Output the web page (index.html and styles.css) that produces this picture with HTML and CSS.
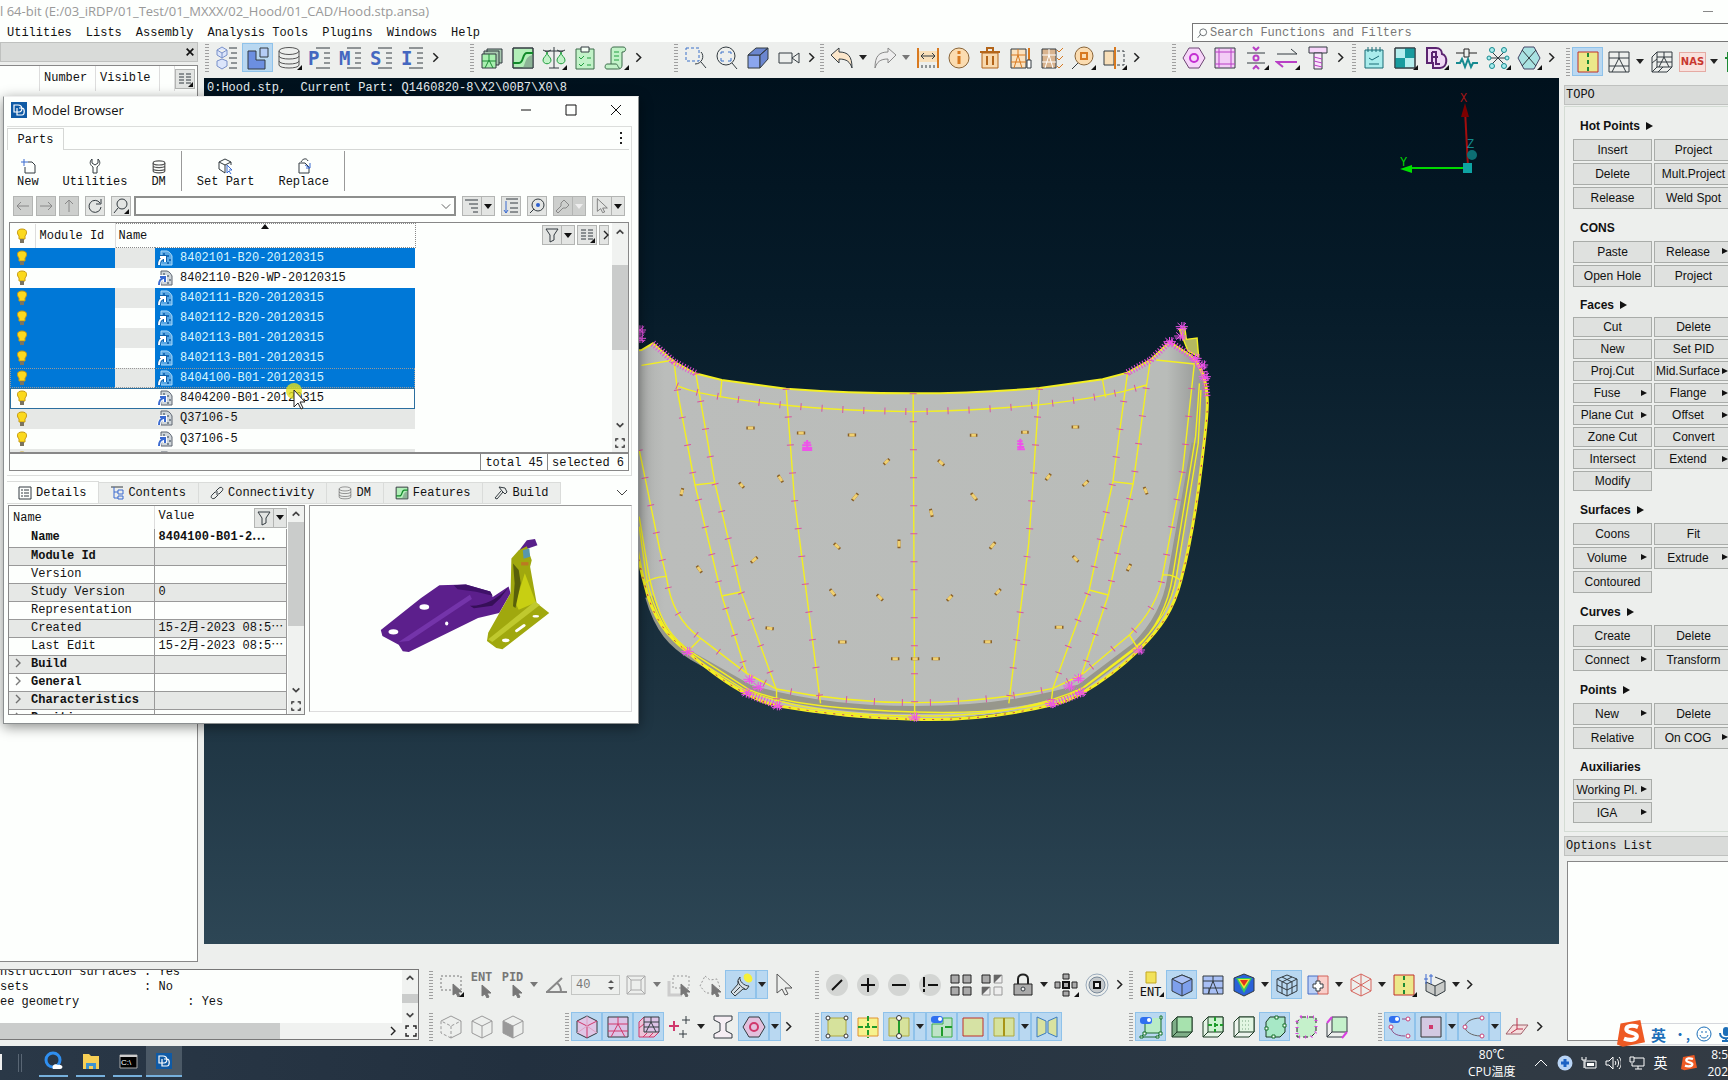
FILE: index.html
```html
<!DOCTYPE html>
<html lang="en">
<head>
  <meta charset="UTF-8">
  <title>Hood.stp.ansa</title>
  <meta name="viewport" content="width=device-width, initial-scale=1.0">
  <link rel="stylesheet" href="styles.css">
</head>
<body>

<!-- icon sprite -->
<svg class="sprite" aria-hidden="true">
  <symbol id="chev-r" viewBox="0 0 12 12"><path d="M4 2l4 4-4 4" stroke="#222" stroke-width="1.4"/></symbol>
  <symbol id="chev-u" viewBox="0 0 12 12"><path d="M2 8l4-4 4 4" stroke="#444" stroke-width="2"/></symbol>
  <symbol id="chev-d" viewBox="0 0 12 12"><path d="M2 4l4 4 4-4" stroke="#444" stroke-width="2"/></symbol>
  <symbol id="chev-thin" viewBox="0 0 12 12"><path d="M1 4l5 5 5-5" stroke="#444"/></symbol>
  <symbol id="full" viewBox="0 0 12 12"><path d="M1 4V1h3M8 1h3v3M11 8v3H8M4 11H1V8" stroke="#222" stroke-width="1.4"/></symbol>

  <symbol id="tree3d" viewBox="0 0 24 24"><path d="M2 4l5-3 5 3v5l-5 3-5-3zM2 4l5 3 5-3M7 7v5M2 15l5-2 5 2v5l-5 3-5-3z" fill="#dbe5fb" stroke="#7990c9"/><path d="M14 2h8M16 7h6M14 12h8M16 17h6M14 22h8"/></symbol>
  <symbol id="blocks" viewBox="0 0 24 24"><path d="M2 5h8v9h9v9H2z" fill="#6c8fe0"/><path d="M14 2h8v9h-8z" fill="#b5cdf5"/></symbol>
  <symbol id="db" viewBox="0 0 24 24"><path d="M2 5v14c0 4 20 4 20 0V5M2 10c0 4 20 4 20 0M2 15c0 4 20 4 20 0" stroke="#555"/><ellipse cx="12" cy="5" rx="10" ry="3.500" stroke="#555"/></symbol>
  <symbol id="lines" viewBox="0 0 24 24"><path d="M8 2h14M16 7h6M16 12h6M16 17h6M8 22h14"/></symbol>
  <symbol id="layers" viewBox="0 0 24 24"><path d="M7 6V3h15v14h-3M4 8V5h15v14h-3" fill="#a8c8b0"/><path d="M2 8h14v14H2z" fill="#a9f0b0"/><path d="M2 15h14M9 8v6M5 22l4-8 4 8" stroke="#1d8a35"/></symbol>
  <symbol id="curve" viewBox="0 0 24 24"><path d="M2 2h20v20H2z" fill="#b2efb8"/><path d="M22 9v13H11c4-2 2-12 11-13z" fill="#8cb396" stroke="none"/><path d="M2 2h20v20H2z"/><path d="M2 17h6c5 0 3-10 8-10h6" stroke="#128a2b" stroke-width="2"/></symbol>
  <symbol id="scale" viewBox="0 0 24 24"><path d="M12 1v21M7 22h10M3 5h18M1 4l4 2 4-2M15 4l4 2 4-2"/><path d="M5 6c0 4-4 5-4 8 0 5 8 5 8 0 0-3-4-4-4-8zM19 6c0 4-4 5-4 8 0 5 8 5 8 0 0-3-4-4-4-8z" fill="#c2f2c8" stroke="#22a040"/></symbol>
  <symbol id="clip" viewBox="0 0 24 24"><path d="M3 3h18v20H3z" fill="#c2f2c8" stroke="#3a6b49"/><path d="M8 1h8v5H8z" fill="#f4fff4"/><path d="M6 11l2 2 3-3M6 18l2 2 3-3M14 12h4M14 19h4" stroke="#22a040"/></symbol>
  <symbol id="scroll" viewBox="0 0 24 24"><path d="M7 18V4c0-2 1-3 3-3h9c4 0 3 5 0 5h-1v13c0 4-3 4-5 4H3c-3 0-2-5 0-5h9c2 0 2 5 4 4" fill="#c2f2c8" stroke="#3a6b49"/><path d="M10 6h5M10 10h5M10 14h5" stroke="#22a040"/></symbol>
  <symbol id="zoomsel" viewBox="0 0 24 24"><path d="M2 2h13v13H2z" stroke="#3a71c9" stroke-dasharray="3 2"/><path d="M17 6c4 4 1 12-6 12M17 16l5 6"/></symbol>
  <symbol id="zoomfit" viewBox="0 0 24 24"><circle cx="11" cy="10" r="9"/><path d="M17 17l5 6"/><path d="M6 8V6h3M13 6h3v2M16 12v3h-3M9 15H6v-3" stroke="#3a71c9"/></symbol>
  <symbol id="prism" viewBox="0 0 24 24"><path d="M2 9h12v13H2z" fill="#8ba6ee"/><path d="M2 9l8-7h12l-8 7zM14 22l8-9V2l-8 7z" fill="#6b86cf"/></symbol>
  <symbol id="cam" viewBox="0 0 24 24"><path d="M2 7h13v10H2z"/><path d="M15 12l7-5v10z"/></symbol>
  <symbol id="undo" viewBox="0 0 24 24"><path d="M1 9l8-7v4c9 0 13 4 13 16-2-6-5-9-13-9v4z" fill="#fbe6ca"/></symbol>
  <symbol id="redo" viewBox="0 0 24 24"><path d="M23 9l-8-7v4C6 6 2 10 2 22c2-6 5-9 13-9v4z" fill="#eee" stroke="#888"/></symbol>
  <symbol id="ruler" viewBox="0 0 24 24"><path d="M2 5h20v11H2z" fill="#f8dfb9" stroke="none"/><path d="M2 2v20M22 2v20" stroke="#d8791f" stroke-width="2"/><path d="M5 10h14M8 7l-3 3 3 3M16 7l3 3-3 3M6 22v-3M10 22v-3M14 22v-3M18 22v-3"/></symbol>
  <symbol id="info" viewBox="0 0 24 24"><circle cx="12" cy="12" r="10" fill="#fbdcb0" stroke="#8a6437"/><path d="M12 10v8M12 5v3" stroke="#d8791f" stroke-width="3"/></symbol>
  <symbol id="trash" viewBox="0 0 24 24"><path d="M4 7h16v15H4z" fill="#f8d9ae" stroke="#b3651a"/><path d="M2 6h20M9 5V2h6v3M9 10v9M15 10v9" stroke="#b3651a" stroke-width="2"/></symbol>
  <symbol id="meshfix" viewBox="0 0 24 24"><path d="M2 3h15v19H2z" fill="#fbe2bf"/><path d="M2 9h15M2 16h15M9 3v6M5 22l4-13 4 13" stroke="#d8791f"/><path d="M20 2v12" stroke="#d8791f" stroke-width="2"/><path d="M18 14h4v8h-4z" fill="#fff"/></symbol>
  <symbol id="meshchk" viewBox="0 0 24 24"><path d="M2 3h14v19H2z" fill="#d9b48f"/><path d="M2 9h14M2 16h14M9 3v6M5 22l4-13 4 13" stroke="#fff"/><path d="M17 4l2 2 4-4M17 12l2 2 4-4M17 20l2 2 4-4" stroke="#d8791f"/></symbol>
  <symbol id="zoompt" viewBox="0 0 24 24"><circle cx="13" cy="10" r="9" fill="#fbdcb0" stroke="#8a6437"/><path d="M10 7h6v6h-6z" stroke="#d8791f" stroke-width="2"/><path d="M7 17l-6 6"/></symbol>
  <symbol id="mirror" viewBox="0 0 24 24"><path d="M2 5h10v14H2z" fill="#f8dfb9"/><path d="M15 5h7v14h-7" stroke-dasharray="3 2"/><path d="M13 1v22" stroke="#d8791f" stroke-width="2"/></symbol>
  <symbol id="hexnut" viewBox="0 0 24 24"><path d="M7 2h10l6 10-6 10H7L1 12z" fill="#f7d5fa" stroke="#6b4472"/><circle cx="12" cy="12" r="4" stroke="#c42fd2" stroke-width="2"/></symbol>
  <symbol id="frame" viewBox="0 0 24 24"><path d="M2 2h20v20H2z" fill="#f3cdf6"/><path d="M6 2v20M18 2v20M2 6h20M2 18h20" stroke="#b83fc5"/></symbol>
  <symbol id="pinch" viewBox="0 0 24 24"><path d="M3 7h18M3 17h18"/><path d="M9 1l3 3 3-3M9 23l3-3 3 3" stroke="#b83fc5" stroke-width="2"/><circle cx="12" cy="12" r="2.500" stroke="#b83fc5" stroke-width="2"/></symbol>
  <symbol id="swap" viewBox="0 0 24 24"><path d="M2 8h20l-6-5"/><path d="M22 16H2l6 5" stroke="#b83fc5" stroke-width="2"/></symbol>
  <symbol id="bolt" viewBox="0 0 24 24"><path d="M3 1h18v6H3z" fill="#f7d5fa"/><path d="M8 7h8v16H8z" fill="#fbe4fc"/><path d="M8 11l8 2M8 15l8 2M8 19l8 2" stroke="#b83fc5"/></symbol>
  <symbol id="note" viewBox="0 0 24 24"><path d="M3 4h18v18H3z" fill="#a9ecec" stroke="#186a75"/><path d="M6 1v5M10 1v5M14 1v5M18 1v5M7 12l3 2 7-4M7 18h10" stroke="#186a75"/></symbol>
  <symbol id="checker" viewBox="0 0 24 24"><path d="M2 2h20v20H2z" fill="#b5eeee"/><path d="M12 2h10v10H12zM2 12h10v10H2z" fill="#199b9e" stroke="none"/><path d="M2 2h20v20H2z"/></symbol>
  <symbol id="de" viewBox="0 0 24 24"><path d="M3 2h9c4 0 6 3 6 6 6 1 6 14-2 14H9v-5H3z" fill="#f0d9f5" stroke="#5b2470" stroke-width="2"/><path d="M8 6h5M8 6v11M8 11h6M12 7v11h4" stroke="#5b2470" stroke-width="2"/></symbol>
  <symbol id="spring" viewBox="0 0 24 24"><path d="M1 7h8M9 3v8M9 3h5v8H9M14 7h8" stroke="#222"/><path d="M1 17h4l2-4 3 8 3-8 3 8 2-4h5" stroke="#178a90" stroke-width="2"/></symbol>
  <symbol id="star" viewBox="0 0 24 24"><path d="M5 5l14 14M19 5L5 19M3 12h18"/><g fill="#a9ecec" stroke="#178a90"><circle cx="6" cy="4" r="2.500"/><circle cx="18" cy="4" r="2.500"/><circle cx="3" cy="12" r="2"/><circle cx="21" cy="12" r="2"/><circle cx="6" cy="20" r="2.500"/><circle cx="18" cy="20" r="2.500"/></g></symbol>
  <symbol id="hexx" viewBox="0 0 24 24"><path d="M7 1h10l6 11-6 11H7L1 12z" fill="#a9e2e2" stroke="#446"/><path d="M5 4l14 16M19 4L5 20"/></symbol>
  <symbol id="yface" viewBox="0 0 24 24"><path d="M2 2h20v20H2z" fill="#ece88a" stroke="#c0302c"/><path d="M12 3v18" stroke="#1d8a35" stroke-width="2" stroke-dasharray="4 3"/></symbol>
  <symbol id="mesh" viewBox="0 0 24 24"><path d="M2 2h20v20H2zM2 8h20M2 16h20M12 2v6M5 22l7-14 7 14"/></symbol>
  <symbol id="mesh3" viewBox="0 0 24 24"><path d="M7 2h15v15H7zM7 7h15M7 12h15M14 2v5M9 17l5-10 5 10M7 2L2 7v15l5-5M2 22h15l5-5M2 13l5-4M8 22l5-5"/></symbol>
  <symbol id="green" viewBox="0 0 24 24"><path d="M4 2v20M1 8h7M4 4h20" stroke="#1d8a35" stroke-width="2"/></symbol>

  <symbol id="arrowfill" viewBox="0 0 24 24"><path d="M14 11v11l3-2 2 4 2-1-2-4h4z" fill="#777" stroke="#777"/></symbol>
  <symbol id="selbox" viewBox="0 0 24 24"><path d="M2 3h20v14H2z" stroke="#777" stroke-dasharray="2 2"/><use href="#arrowfill"/></symbol>
  <symbol id="angle" viewBox="0 0 24 24"><path d="M2 19h21M3 19L18 5M13 10c3 2 4 6 4 9" stroke="#888" stroke-width="2"/></symbol>
  <symbol id="boxes" viewBox="0 0 24 24"><path d="M3 3h18v18H3zM7 7h10v10H7zM3 3l4 4M21 3l-4 4M3 21l4-4M21 21l-4-4" stroke="#aaa"/></symbol>
  <symbol id="selall" viewBox="0 0 24 24"><path d="M6 3h16v12H6z" stroke="#999" stroke-dasharray="2 2"/><path d="M2 8v14h13" stroke="#ccc" stroke-width="3"/><use href="#arrowfill"/></symbol>
  <symbol id="selpoly" viewBox="0 0 24 24"><path d="M7 3l5 4 7-1 3 9-5 5H8l-6-7z" stroke="#999" stroke-dasharray="2 2"/><use href="#arrowfill"/></symbol>
  <symbol id="torch" viewBox="0 0 24 24"><ellipse cx="19" cy="5" rx="4" ry="5" fill="#f5f03a" stroke="none" transform="rotate(-40 19 5)"/><path d="M11 4c-1 4 4 9 9 9l-2 3c-1 1-3 0-4 0l-8 7-4-4 7-8V7z" fill="#d5dfe6"/><path d="M9 8c1 4 3 6 7 8M5 20l6-6"/></symbol>
  <symbol id="cursor" viewBox="0 0 24 24"><path d="M5 1v19l5-4 3 6 3-1-3-6h7z" stroke="#555"/></symbol>
  <symbol id="disc" viewBox="0 0 24 24"><circle cx="12" cy="12" r="11" fill="#d3d5d3" stroke="none"/></symbol>
  <symbol id="quad" viewBox="0 0 24 24"><path d="M2 2h8v8H2zM14 2h8v8h-8zM2 14h8v8H2zM14 14h8v8h-8z" fill="#aaa" stroke="#222"/></symbol>
  <symbol id="quad2" viewBox="0 0 24 24"><path d="M2 2h8v8H2z" fill="#aaa" stroke="#222"/><path d="M14 2h8v8h-8zM2 14h8v8H2zM14 14h8v8h-8z" fill="#eee" stroke="#999"/><path d="M14 2h8l-8 8zM2 14h8l-8 8z" fill="#666" stroke="none"/></symbol>
  <symbol id="lock" viewBox="0 0 24 24"><path d="M7 11V6c0-6 10-6 10 0v5" stroke="#222" stroke-width="2"/><path d="M3 11h18v11H3z" fill="#aaa" stroke="#222"/><circle cx="12" cy="16" r="2" fill="#eee"/></symbol>
  <symbol id="cross" viewBox="0 0 24 24"><path d="M9 1h6v5H9zM9 9h6v6H9zM9 18h6v5H9zM1 9h5v6H1zM18 9h5v6h-5z" fill="#aaa" stroke="#222"/><path d="M9 9h6v6H9z" stroke="#111" stroke-width="2"/></symbol>
  <symbol id="target" viewBox="0 0 24 24"><circle cx="12" cy="12" r="11" stroke="#9ab"/><circle cx="12" cy="12" r="8" fill="#c4c8cb" stroke="#789"/><path d="M9 9h6v6H9z" fill="#eee" stroke="#111" stroke-width="2"/></symbol>
  <symbol id="entbox" viewBox="0 0 24 14"><path d="M7 1h10v11H7z" fill="#f2e25a" stroke="#c3a722"/></symbol>
  <symbol id="cubeblue" viewBox="0 0 24 24"><path d="M2 6l10-4 10 4v12l-10 5-10-5z" fill="#7ea0ec"/><path d="M2 6l10-4 10 4-10 5z" fill="#a9c0f5"/><path d="M12 11v12"/></symbol>
  <symbol id="meshblue" viewBox="0 0 24 24"><path d="M2 3h20v18H2z" fill="#a9c0f5"/><path d="M2 8h20M2 15h20M12 3v5M7 21l5-13 5 13M8 15v6"/></symbol>
  <symbol id="rainbow" viewBox="0 0 24 24"><path d="M2 5l10-4 10 4v13l-10 5-10-5z" fill="#2b62d9"/><path d="M4 5h16l-8 15z" fill="#35c860" stroke="none"/><path d="M6 6h12l-6 10z" fill="#f3e134" stroke="none"/><path d="M8 7h8l-4 6z" fill="#e0311e" stroke="none"/></symbol>
  <symbol id="cubegrid" viewBox="0 0 24 24"><path d="M2 6l10-4 10 4v12l-10 5-10-5zM2 6l10 5 10-5M12 11v12M2 12l10 5 10-5M7 4l10 5v12M17 4L7 9v12"/></symbol>
  <symbol id="plusbox" viewBox="0 0 24 24"><path d="M2 3h10v18H2z" fill="#bcd0f5" stroke="#476dc4"/><path d="M12 3h10v18H12z" fill="#f9cfca" stroke="#d3625a"/><path d="M10 8h4v3h3v4h-3v3h-4v-3H7v-4h3z" fill="#fff"/></symbol>
  <symbol id="cubered" viewBox="0 0 24 24"><path d="M2 6l10-5 10 5v12l-10 5-10-5zM2 6l10 6 10-6M12 1v11M12 12v11M2 18l10-6 10 6" stroke="#d6645c"/></symbol>
  <symbol id="cubeset" viewBox="0 0 24 24"><path d="M3 9l9 4 10-5v10l-9 5-10-5z" fill="#c9cbc9"/><path d="M12 4l10 4M12 13v10"/><path d="M3 1v10M8 1v10M1 6h4M6 3h4" stroke="#3c68cf"/></symbol>

  <symbol id="cubedash" viewBox="0 0 24 24"><path d="M2 6l10-5 10 5v12l-10 5" stroke="#999"/><path d="M12 23L2 18V6l10 5 10-5M12 11v12" stroke="#999" stroke-dasharray="3 2"/></symbol>
  <symbol id="cubegray" viewBox="0 0 24 24"><path d="M2 6l10-5 10 5v12l-10 5-10-5zM2 6l10 5 10-5M12 11v12" stroke="#999"/></symbol>
  <symbol id="cubehalf" viewBox="0 0 24 24"><path d="M2 6l10-5 10 5v12l-10 5-10-5zM2 6l10 5 10-5M12 11v12" stroke="#999"/><path d="M2 6l10 5v12L2 18z" fill="#999" stroke="none"/></symbol>
  <symbol id="cubepink" viewBox="0 0 24 24"><path d="M2 6l10-5 10 5v12l-10 5-10-5z" fill="#e0c6e6"/><path d="M2 6l10 5 10-5M12 11v12" stroke="#d0386c"/><path d="M12 1v10M2 18l10-7 10 7" stroke="#dfa0c4"/></symbol>
  <symbol id="meshpink" viewBox="0 0 24 24"><path d="M2 2h20v20H2z" fill="#dcc3e6"/><path d="M2 9h20M2 16h20M12 2v7M5 22l7-13 7 13" stroke="#d0386c"/></symbol>
  <symbol id="mesh3pink" viewBox="0 0 24 24"><path d="M7 2L2 7v15h15l5-5M2 13l5-4M6 22l4-4M12 22l4-4" stroke="#d0386c" fill="#edc3d8"/><path d="M7 2h15v15H7z" fill="#dcc3e6"/><path d="M7 7h15M7 12h15M14 2v5M9 17l5-10 5 10"/></symbol>
  <symbol id="pluses" viewBox="0 0 24 24"><path d="M1 11h10M6 6v10" stroke="#d0386c" stroke-width="2"/><path d="M14 5h8M18 1v8M11 19h8M15 15v8"/></symbol>
  <symbol id="ibeam" viewBox="0 0 24 24"><path d="M3 1h18v4l-6 3v8l6 3v4H3v-4l6-3V8L3 5z" fill="#f6eef4"/></symbol>
  <symbol id="hexpink" viewBox="0 0 24 24"><path d="M7 2h10l6 10-6 10H7L1 12z" fill="#e3c0dd"/><circle cx="12" cy="12" r="4" stroke="#d0386c" stroke-width="2"/></symbol>
  <symbol id="sqpts" viewBox="0 0 24 24"><path d="M3 3h18v18H3z" fill="#d6e29c" stroke="#b0a93e"/><g fill="#fff" stroke="#333"><circle cx="3" cy="3" r="2"/><circle cx="21" cy="3" r="2"/><circle cx="3" cy="21" r="2"/><circle cx="21" cy="21" r="2"/></g></symbol>
  <symbol id="sqplus" viewBox="0 0 24 24"><path d="M2 3h20v18H2z" fill="#f6f28d" stroke="#e0922e"/><path d="M2 12h20M12 1v22" stroke="#1f9c2b" stroke-width="2" stroke-dasharray="5 2"/></symbol>
  <symbol id="sqmid" viewBox="0 0 24 24"><path d="M2 3h20v18H2z" fill="#d6e29c" stroke="#b0a93e"/><path d="M12 3v18" stroke="#1f9c2b" stroke-width="2"/><g fill="#fff" stroke="#333"><circle cx="12" cy="3" r="2.500"/><circle cx="12" cy="21" r="2.500"/></g></symbol>
  <symbol id="sqtog" viewBox="0 0 24 24"><path d="M2 9h11V3h9v19H2z" fill="#bfe3c7" stroke="#3fae4b"/><path d="M12 12v9M15 12h7" stroke="#1f9c2b" stroke-width="2"/><rect x="1" y="1" width="12" height="7" rx="3" fill="#2f6ff0" stroke="none"/><circle cx="10" cy="4" r="2" fill="#fff" stroke="none"/></symbol>
  <symbol id="sqred" viewBox="0 0 24 24"><path d="M2 3h20v18H2z" fill="#d6e2a4" stroke="#c0302c"/></symbol>
  <symbol id="sqsplit" viewBox="0 0 24 24"><path d="M2 3h20v18H2z" fill="#d6e29c" stroke="#b0a93e"/><path d="M12 3v18" stroke="#a89416" stroke-width="2"/></symbol>
  <symbol id="book" viewBox="0 0 24 24"><path d="M2 2l9 4v12l-9 4zM22 2l-9 4v12l9 4z" fill="#d9e2a0" stroke="#3b7bc0"/></symbol>
  <symbol id="gtog" viewBox="0 0 24 24"><path d="M6 9h7V3h9v15H6z" fill="#b8ecc6" stroke="none"/><path d="M22 3v15H6V9M6 18l-4 4h16l4-4" stroke="#1d6a30"/><path d="M1 21h3v2H1zM17 21h3v2h-3zM21 1h2v3h-2zM20 17h3v3h-3zM4 17h3v3H4z" fill="#fff" stroke="#14732b"/><rect x="1" y="2" width="12" height="7" rx="3" fill="#2f6ff0" stroke="none"/><circle cx="10" cy="5" r="2" fill="#fff" stroke="none"/></symbol>
  <symbol id="gbox" viewBox="0 0 24 24"><path d="M7 2L2 7v15h15l5-5V2z" fill="#7fae88" stroke="#1c3b24"/><path d="M7 2h15v15H7z" fill="#a7e2ae" stroke="#1c3b24"/><path d="M2 22l5-5" stroke="#1c3b24"/></symbol>
  <symbol id="gplus" viewBox="0 0 24 24"><path d="M7 2L2 7v15h15l5-5V2z" fill="#e6f5e7" stroke="#1c3b24"/><path d="M7 2h15v15H7z" fill="#cdf3d0" stroke="#1c3b24"/><path d="M2 22l5-5" stroke="#1c3b24"/><path d="M7 10h15M14 2v15" stroke="#1f9c2b" stroke-width="2" stroke-dasharray="4 2"/></symbol>
  <symbol id="gdots" viewBox="0 0 24 24"><path d="M7 2L2 7v15h15l5-5V2z" fill="#eef5ee" stroke="#1c3b24"/><path d="M7 2h15v15H7z" fill="#e2f6e2" stroke="#1c3b24"/><path d="M2 22l5-5" stroke="#1c3b24"/><path d="M10 6h9M10 10h9M10 14h9" stroke="#7aa582" stroke-dasharray="1 2"/></symbol>
  <symbol id="gpts" viewBox="0 0 24 24"><path d="M7 2h15v15l-5 5H3V7z" fill="#a7e8c6" stroke="#1c3b24"/><g fill="#fff" stroke="#14732b"><path d="M12 1h3v3h-3zM20 9h3v3h-3zM2 12h3v3H2zM9 20h3v3H9z"/></g></symbol>
  <symbol id="gmag" viewBox="0 0 24 24"><path d="M7 2h15v15l-5 5H3V7z" fill="#c5f1cb" stroke="#222" stroke-dasharray="5 3"/><path d="M7 2h15v15l-5 5H3V7z" stroke="#d83fe0" stroke-width="3" stroke-dasharray="1 5"/></symbol>
  <symbol id="gside" viewBox="0 0 24 24"><path d="M7 2h15v15H7z" fill="#c5f1cb"/><path d="M2 8v14h15M2 22l5-5"/><path d="M7 2L2 8M22 17l-5 6" stroke="#d83fe0" stroke-width="2"/></symbol>
  <symbol id="ctog" viewBox="0 0 24 24"><path d="M3 11c0 6 4 10 14 10M14 4h4" stroke="#8c4f87"/><rect x="1" y="1" width="11" height="7" rx="3" fill="#2f6ff0" stroke="none"/><circle cx="9" cy="4" r="2" fill="#fff" stroke="none"/><g fill="#fff" stroke="#c94279"><circle cx="20" cy="4" r="2"/><circle cx="3" cy="12" r="2"/><circle cx="20" cy="21" r="2"/></g></symbol>
  <symbol id="sqpt" viewBox="0 0 24 24"><path d="M2 2h20v20H2z" fill="#d3c9e2" stroke="#333"/><path d="M10 10h4v4h-4z" fill="#d0386c" stroke="none"/></symbol>
  <symbol id="carc" viewBox="0 0 24 24"><path d="M19 3C8 3 3 8 3 12s6 9 16 9" stroke="#666"/><g fill="#fff" stroke="#c94279"><circle cx="20" cy="3" r="2"/><circle cx="3" cy="12" r="2"/><circle cx="20" cy="21" r="2"/></g></symbol>
  <symbol id="plane" viewBox="0 0 24 24"><path d="M8 10h15l-7 9H1z" fill="#f6dede" stroke="#a0606a"/><path d="M12 3v11h6M12 14l-6 4" stroke="#c0304c"/></symbol>

  <symbol id="bulb" viewBox="0 0 12 16"><path d="M6 1C0 1 1 6 3 8v3h6V8c2-2 3-7-3-7z" fill="#fbd91e" stroke="#c79a10"/><path d="M4 12h4M4 14h4" stroke="#7b7460" stroke-width="2"/></symbol>
  <symbol id="part" viewBox="0 0 16 16"><path d="M4 1h6c3 1 4 3 5 5v9H4z" fill="#cfd6da" stroke="#5c6470"/><path d="M6 3h2v2H6zM10 5h2v2h-2zM12 9h2v2h-2zM10 12h2v2h-2z" fill="#7e8a94" stroke="none"/><path d="M3 7h5v5M8 7c-5 2-6 4-6 8" stroke="#fff" stroke-width="4"/><path d="M3 7h5v5M8 7c-5 2-6 4-6 8" stroke="#3b6bd0" stroke-width="2"/></symbol>
  <symbol id="part-sel" viewBox="0 0 16 16"><path d="M4 1h6c3 1 4 3 5 5v9H4z" fill="#58a8e6" stroke="#a8d8f8"/><path d="M6 3h2v2H6zM10 5h2v2h-2zM12 9h2v2h-2zM10 12h2v2h-2z" fill="#1d6cb4" stroke="none"/><path d="M3 7h5v5M8 7c-5 2-6 4-6 8" stroke="#0a62b0" stroke-width="4"/><path d="M3 7h5v5M8 7c-5 2-6 4-6 8" stroke="#fff" stroke-width="2"/></symbol>
  <symbol id="funnel" viewBox="0 0 16 16"><path d="M2 2h12L10 8v5l-4 2V8z"/></symbol>
  <symbol id="cols" viewBox="0 0 16 16"><path d="M2 3h5M2 6h5M2 9h5M2 12h5M9 3h5M9 6h5M9 9h5M9 12h5"/></symbol>
  <symbol id="ansa" viewBox="0 0 16 16"><path d="M0 0h16v16H0z" fill="#0f5aa5" stroke="none"/><path d="M3 3h4c5 0 5 7 1 7H3zM8 6h3c3 0 3 7 0 7H6V6" stroke="#fff" stroke-width="1.200"/></symbol>
  <symbol id="new" viewBox="0 0 16 16"><path d="M8 4h4l3 3v8H5V9"/><path d="M1 4h7M4 1v7" stroke="#3b6bd0"/></symbol>
  <symbol id="wrench" viewBox="0 0 16 16"><path d="M5 1v4l3 2 3-2V1c3 3 2 6-1 8v6H6V9C3 7 2 4 5 1z"/></symbol>
  <symbol id="setpart" viewBox="0 0 16 16"><path d="M1 4l6-3 6 3v3M1 4v7l6 4V7M1 4l6 3 6-3"/><path d="M9 7v8l2-2 2 3M9 7l5 5h-3" stroke="#3b6bd0"/></symbol>
  <symbol id="replace" viewBox="0 0 16 16"><path d="M3 15V5h6l4 4v6zM5 4c2-4 6-4 7-1"/><path d="M9 7l5 3M14 5v5h-4" stroke="#3b6bd0"/></symbol>
  <symbol id="logo-s" viewBox="0 0 24 24"><path d="M3 3l17-3 4 19-19 4-5-2z" fill="#ee5a24" stroke="none"/><path d="M18 6c-5-2-10-1-10 2 0 4 9 2 9 6 0 3-6 4-11 2" stroke="#fff" stroke-width="3.500"/></symbol>
</svg>

<div class="app">
  <header class="titlebar"><span>l 64-bit (E:/03_iRDP/01_Test/01_MXXX/02_Hood/01_CAD/Hood.stp.ansa)</span><button class="min" aria-label="Minimize"></button></header>
  <nav class="menubar">
    <button>Utilities</button><button>Lists</button><button>Assembly</button><button>Analysis Tools</button><button>Plugins</button><button>Windows</button><button>Help</button>
    <label class="find"><svg viewBox="0 0 16 16"><circle cx="9" cy="7" r="5"/><path d="M5 10l-4 5"/></svg><input type="text" placeholder="Search Functions and Filters" aria-label="Search Functions and Filters"></label>
  </nav>

  <div class="body">
    <main class="work">
      <aside class="dock">
        <div class="dock-head"><button aria-label="Close"><svg viewBox="0 0 12 12"><path d="M2 2l8 8M10 2l-8 8" stroke="#111" stroke-width="2"/></svg></button></div>
        <div class="dock-list">
          <div class="dock-cols"><span></span><span>Number</span><span>Visible</span><span></span><button class="btn more" aria-label="Columns"><svg class="s16"><use href="#cols"/></svg></button></div>
        </div>
      </aside>

      <div class="toolbar top">
        <div class="group"><i class="grip"></i>
          <button class="tool" aria-label="Model"><svg><use href="#tree3d"/></svg></button>
          <button class="tool on" aria-label="Parts"><svg><use href="#blocks"/></svg></button>
          <button class="tool more" aria-label="Database"><svg><use href="#db"/></svg></button>
          <button class="tool letter"><b>P</b><svg><use href="#lines"/></svg></button>
          <button class="tool letter"><b>M</b><svg><use href="#lines"/></svg></button>
          <button class="tool letter"><b>S</b><svg><use href="#lines"/></svg></button>
          <button class="tool letter"><b>I</b><svg><use href="#lines"/></svg></button>
          <button class="next" aria-label="More"><svg><use href="#chev-r"/></svg></button>
        </div>
        <div class="group"><i class="grip"></i>
          <button class="tool" aria-label="Mesh layers"><svg><use href="#layers"/></svg></button>
          <button class="tool" aria-label="Curve"><svg><use href="#curve"/></svg></button>
          <button class="tool more" aria-label="Compare"><svg><use href="#scale"/></svg></button>
          <button class="tool" aria-label="Checks"><svg><use href="#clip"/></svg></button>
          <button class="tool more" aria-label="Scripts"><svg><use href="#scroll"/></svg></button>
          <button class="next" aria-label="More"><svg><use href="#chev-r"/></svg></button>
        </div>
        <div class="group"><i class="grip"></i>
          <button class="tool" aria-label="Zoom area"><svg><use href="#zoomsel"/></svg></button>
          <button class="tool" aria-label="Zoom all"><svg><use href="#zoomfit"/></svg></button>
          <button class="tool" aria-label="View"><svg><use href="#prism"/></svg></button>
          <button class="tool" aria-label="Camera"><svg><use href="#cam"/></svg></button>
          <button class="next" aria-label="More"><svg><use href="#chev-r"/></svg></button>
        </div>
        <div class="group"><i class="grip"></i>
          <button class="tool" aria-label="Undo"><svg><use href="#undo"/></svg></button><button class="drop" aria-label="Undo list"></button>
          <button class="tool" aria-label="Redo"><svg><use href="#redo"/></svg></button><button class="drop dim" aria-label="Redo list"></button>
          <button class="tool" aria-label="Measure"><svg><use href="#ruler"/></svg></button>
          <button class="tool" aria-label="Info"><svg><use href="#info"/></svg></button>
          <button class="tool" aria-label="Delete"><svg><use href="#trash"/></svg></button>
          <button class="tool" aria-label="Fix mesh"><svg><use href="#meshfix"/></svg></button>
          <button class="tool" aria-label="Check mesh"><svg><use href="#meshchk"/></svg></button>
          <button class="tool more" aria-label="Inspect"><svg><use href="#zoompt"/></svg></button>
          <button class="tool more" aria-label="Symmetry"><svg><use href="#mirror"/></svg></button>
          <button class="next" aria-label="More"><svg><use href="#chev-r"/></svg></button>
        </div>
        <div class="group"><i class="grip"></i>
          <button class="tool" aria-label="Nut"><svg><use href="#hexnut"/></svg></button>
          <button class="tool" aria-label="Frame"><svg><use href="#frame"/></svg></button>
          <button class="tool more" aria-label="Connections"><svg><use href="#pinch"/></svg></button>
          <button class="tool more" aria-label="Swap"><svg><use href="#swap"/></svg></button>
          <button class="tool" aria-label="Bolt"><svg><use href="#bolt"/></svg></button>
          <button class="next" aria-label="More"><svg><use href="#chev-r"/></svg></button>
        </div>
        <div class="group"><i class="grip"></i>
          <button class="tool" aria-label="Notes"><svg><use href="#note"/></svg></button>
          <button class="tool more" aria-label="Checker"><svg><use href="#checker"/></svg></button>
          <button class="tool more" aria-label="DE"><svg><use href="#de"/></svg></button>
          <button class="tool" aria-label="Spring"><svg><use href="#spring"/></svg></button>
          <button class="tool more" aria-label="Rigid"><svg><use href="#star"/></svg></button>
          <button class="tool more" aria-label="Body"><svg><use href="#hexx"/></svg></button>
          <button class="next" aria-label="More"><svg><use href="#chev-r"/></svg></button>
        </div>
      </div>

      <section class="viewport">
        <p class="part-line">0:Hood.stp,&nbsp; Current Part: Q1460820-8\X2\00B7\X0\8</p>
        <svg class="axes" viewBox="0 0 90 90">
          <path d="M72 77L69 20" stroke="#a30d0d" stroke-width="2"/><path d="M69 13l-4 14h8z" fill="#7c0000" stroke="none"/>
          <path d="M72 78H12" stroke="#00d800" stroke-width="2"/><path d="M4 79l12-4v8z" fill="#00e000" stroke="none"/>
          <circle cx="76" cy="65" r="5" fill="#0d6f74" stroke="none"/><path d="M67 73h9v10h-9z" fill="#0ea3a3" stroke="none"/>
          <text x="64" y="12" fill="#a31515">X</text><text x="4" y="76" fill="#00d800">Y</text><text x="71" y="58" fill="#12878c">Z</text>
        </svg>

        <svg class="hood" viewBox="0 0 1568 1260" preserveAspectRatio="none">
          <defs>
            <linearGradient id="skin"><stop offset="0" stop-color="#a9aba9"/><stop offset=".06" stop-color="#bbbdbb"/><stop offset=".93" stop-color="#b9bcb9"/><stop offset="1" stop-color="#8f918f"/></linearGradient>
            <path id="ast" d="M-16 0h32M0-14v28M-11-11l22 22M11-11l-22 22M-14 6h28M6-14v28"/>
            <path id="edge" d="M0 560C10 660 20 750 38 820 60 930 100 980 150 1025 200 1075 250 1120 305 1152 330 1168 355 1180 385 1187Q560 1222 743 1228T1100 1185C1130 1178 1155 1168 1180 1150 1235 1115 1285 1070 1330 1020 1390 950 1420 900 1440 810 1465 700 1480 600 1495 450 1502 380 1512 300 1508 260 1507 230 1500 180 1470 140"/>
            <path id="inner" d="M24 420L36 485 78 720 95 800C105 880 130 940 185 985L305 1090 383 1137Q560 1178 743 1178T1105 1135L1180 1095 1305 975Q1380 890 1392 795L1445 475 1475 160"/>
            <path id="crown" d="M122 227Q150 240 180 248 400 300 740 305 1070 300 1290 244L1350 225"/>
            <path id="ribs" d="M115 155L125 250 170 525 240 858 305 1090M172 190L222 520 290 845 383 1140 383 1185M408 236L430 570 498 1180M740 250L744 1225M1070 236L1042 700 990 1180M1300 190L1262 515 1200 840 1105 1135 1100 1185M1360 150L1350 225 1315 520 1250 855 1180 1095"/>
            <path id="clips" d="M308 354h14M440 369h14M573 375h14M892 376h12M1026 367h12M1158 351h12M666 460l9-10M808 453l10 10M288 521l7 9M389 499l8 14M1089 507l8-12M1186 525l9-10M1345 535l5 14M134 553l3-14M583 568l10-14M894 553l10 14M786 601l3 15M536 703l10 11M703 693v17M943 713l9-13M319 755l11-11M1160 741l9 11M1301 779l6-13M177 771l8 13M525 841l9 13M648 857l10 11M831 869l9-11M957 851l9-11M358 954l14 2M1114 952h15M548 996h14M928 995h14M686 1046h14M738 1046h14M792 1046h14"/>
          </defs>
          <path d="M0 122L30 120 60 100 115 155 170 190 240 210 408 236Q570 250 740 250T1070 234L1235 208 1300 188 1360 150 1410 95 1470 140C1500 180 1507 230 1508 260 1512 300 1502 380 1495 450 1480 600 1465 700 1440 810 1420 900 1390 950 1330 1020 1285 1070 1235 1115 1180 1150 1155 1168 1130 1178 1100 1185Q920 1225 743 1228T385 1187C355 1180 330 1168 305 1152 250 1120 200 1075 150 1025 100 980 60 930 38 820 20 750 10 660 0 560z" fill="url(#skin)" stroke="none"/>
          <path d="M50 860C75 960 110 1000 165 1040L310 1135Q500 1200 743 1200T1175 1135L1320 1010Q1400 920 1415 800L1478 400" stroke="#97978c" stroke-width="8"/>
          <g stroke="#f3ef22" stroke-width="1.400">
            <path d="M0 122L30 120 60 100 115 155 170 190 240 210 408 236Q570 250 740 250T1070 234L1235 208 1300 188 1360 150 1410 95 1470 140" stroke-width="2"/>
            <use href="#edge" stroke-width="3"/><use href="#inner"/><use href="#crown"/><use href="#ribs"/>
            <path d="M24 620L50 800C80 950 110 985 165 1030L310 1138Q420 1195 743 1206T1178 1138L1325 1008Q1410 920 1428 800L1485 400 1492 240M24 650L44 810C75 960 120 1000 175 1050L300 1140Q460 1215 743 1218T1190 1130L1320 1018Q1400 930 1418 800L1478 380 1488 220"/>
            <path d="M30 166L115 150M1375 150L1475 162M240 210L236 262M1235 210L1243 262M170 525L222 518M240 858L290 846M1262 515L1315 522M1200 840L1250 855M38 820Q65 798 95 800M1440 812Q1420 792 1392 795M150 1025L185 985M1330 1020L1305 975"/>
            <path d="M1436 60l14-6 4 34 28-4 4 56-28-18z" fill="#b4b860"/>
          </g>
          <g stroke="#d9549f" stroke-width="7">
            <use href="#inner" stroke-dasharray="1 27"/><use href="#crown" stroke-dasharray="1 20"/><use href="#ribs" stroke-dasharray="1 27"/>
            <path d="M60 100L115 155 172 190M1300 188L1360 150 1410 95 1470 140 1500 180 1508 260M305 1152L385 1187M1100 1185L1180 1150" stroke="#e94fd9" stroke-dasharray="1 2"/>
          </g>
          <use href="#edge" stroke="#c8325e" stroke-dasharray="2 7"/>
          <g stroke="#ee53ea" stroke-width="1">
            <use href="#ast" x="150" y="1025"/><use href="#ast" x="305" y="1148"/><use href="#ast" x="312" y="1108"/><use href="#ast" x="335" y="1130"/><use href="#ast" x="385" y="1187"/><use href="#ast" x="743" y="1221"/><use href="#ast" x="1100" y="1180"/><use href="#ast" x="1178" y="1147"/><use href="#ast" x="1172" y="1105"/><use href="#ast" x="1148" y="1128"/><use href="#ast" x="1330" y="1020"/><use href="#ast" x="1442" y="50"/><use href="#ast" x="1438" y="78"/><use href="#ast" x="1410" y="95"/><use href="#ast" x="1478" y="145"/><use href="#ast" x="1495" y="165"/><use href="#ast" x="1502" y="200"/><use href="#ast" x="26" y="60"/><use href="#ast" x="26" y="85"/>
            <path d="M450 420h26M450 414h26M450 406h24M454 398h18M463 390v30M1012 418h20M1012 411h18M1012 402h16M1012 394h14M1020 386v30" stroke-width="2"/>
          </g>
          <use href="#clips" stroke="#8a6128" stroke-width="3" stroke-linecap="square"/>
          <use href="#clips" stroke="#f0d070" stroke-width="3"/>
        </svg>
      </section>

      <section class="log">
        <pre>nstruction surfaces : Yes
sets                : No
ee geometry               : Yes</pre>
        <div class="vbar"><svg><use href="#chev-u"/></svg><i></i><svg><use href="#chev-d"/></svg></div>
        <div class="hbar"><i></i><svg><use href="#chev-r"/></svg><svg><use href="#full"/></svg></div>
      </section>

      <div class="bottom">
        <div class="toolbar row1">
          <div class="group"><i class="grip"></i>
            <button class="tool more dim" aria-label="Box select"><svg><use href="#selbox"/></svg></button>
            <button class="tool word">ENT<svg><use href="#arrowfill"/></svg></button>
            <button class="tool word">PID<svg><use href="#arrowfill"/></svg></button><button class="drop dim" aria-label="PID options"></button>
            <button class="tool" aria-label="Angle"><svg><use href="#angle"/></svg></button>
            <span class="spin"><input type="text" value="40" aria-label="Angle value"><svg viewBox="0 0 8 14"><path d="M1 5l3-3 3 3zM1 9l3 3 3-3z" fill="#555" stroke="none"/></svg></span>
            <button class="tool" aria-label="Region"><svg><use href="#boxes"/></svg></button><button class="drop dim" aria-label="Region options"></button>
            <button class="tool" aria-label="Select all"><svg><use href="#selall"/></svg></button>
            <button class="tool" aria-label="Polygon select"><svg><use href="#selpoly"/></svg></button>
            <button class="tool on" aria-label="Highlight"><svg><use href="#torch"/></svg></button><button class="drop on" aria-label="Highlight options"></button>
            <button class="tool" aria-label="Pick"><svg><use href="#cursor"/></svg></button>
          </div>
          <div class="group"><i class="grip"></i>
            <button class="tool" aria-label="Draw"><svg viewBox="0 0 24 24"><use href="#disc"/><path d="M7 17L17 7" stroke="#111" stroke-width="2"/></svg></button>
            <button class="tool" aria-label="Add"><svg viewBox="0 0 24 24"><use href="#disc"/><path d="M5 12h14M12 5v14" stroke="#111" stroke-width="2"/></svg></button>
            <button class="tool" aria-label="Remove"><svg viewBox="0 0 24 24"><use href="#disc"/><path d="M5 12h14" stroke="#111" stroke-width="2"/></svg></button>
            <button class="tool" aria-label="Not"><svg viewBox="0 0 24 24"><use href="#disc"/><path d="M10 12h10M6 4v10M6 16v3" stroke="#111" stroke-width="2"/></svg></button>
            <button class="tool" aria-label="All"><svg><use href="#quad"/></svg></button>
            <button class="tool" aria-label="Invert"><svg><use href="#quad2"/></svg></button>
            <button class="tool" aria-label="Lock"><svg><use href="#lock"/></svg></button><button class="drop" aria-label="Lock options"></button>
            <button class="tool more" aria-label="Neighbours"><svg><use href="#cross"/></svg></button>
            <button class="tool" aria-label="Focus"><svg><use href="#target"/></svg></button>
            <button class="next" aria-label="More"><svg><use href="#chev-r"/></svg></button>
          </div>
          <div class="group"><i class="grip"></i>
            <button class="tool more ent"><svg><use href="#entbox"/></svg>ENT</button>
            <button class="tool on" aria-label="Shaded"><svg><use href="#cubeblue"/></svg></button>
            <button class="tool" aria-label="Mesh"><svg><use href="#meshblue"/></svg></button>
            <button class="tool" aria-label="Fringe"><svg><use href="#rainbow"/></svg></button><button class="drop" aria-label="Fringe options"></button>
            <button class="tool on" aria-label="Grid"><svg><use href="#cubegrid"/></svg></button>
            <button class="tool" aria-label="Sides"><svg><use href="#plusbox"/></svg></button><button class="drop" aria-label="Sides options"></button>
            <button class="tool" aria-label="Wire"><svg><use href="#cubered"/></svg></button><button class="drop" aria-label="Wire options"></button>
            <button class="tool more" aria-label="Face colour"><svg><use href="#yface"/></svg></button>
            <button class="tool" aria-label="Settings"><svg><use href="#cubeset"/></svg></button><button class="drop" aria-label="View settings"></button>
            <button class="next" aria-label="More"><svg><use href="#chev-r"/></svg></button>
          </div>
        </div>
        <div class="toolbar row2">
          <div class="group"><i class="grip"></i>
            <button class="tool" aria-label="Hidden"><svg><use href="#cubedash"/></svg></button>
            <button class="tool" aria-label="Outline"><svg><use href="#cubegray"/></svg></button>
            <button class="tool" aria-label="Half"><svg><use href="#cubehalf"/></svg></button>
          </div>
          <div class="group"><i class="grip"></i>
            <button class="tool on" aria-label="Solid"><svg><use href="#cubepink"/></svg></button>
            <button class="tool on" aria-label="Shell mesh"><svg><use href="#meshpink"/></svg></button>
            <button class="tool on" aria-label="Volume mesh"><svg><use href="#mesh3pink"/></svg></button>
            <button class="tool" aria-label="Points"><svg><use href="#pluses"/></svg></button><button class="drop" aria-label="Point options"></button>
            <button class="tool" aria-label="Beam"><svg><use href="#ibeam"/></svg></button>
            <button class="tool on" aria-label="Nut"><svg><use href="#hexpink"/></svg></button><button class="drop on" aria-label="Nut options"></button>
            <button class="next" aria-label="More"><svg><use href="#chev-r"/></svg></button>
          </div>
          <div class="group"><i class="grip"></i>
            <button class="tool on" aria-label="Corners"><svg><use href="#sqpts"/></svg></button>
            <button class="tool" aria-label="Split"><svg><use href="#sqplus"/></svg></button>
            <button class="tool on" aria-label="Middle"><svg><use href="#sqmid"/></svg></button><button class="drop on" aria-label="Middle options"></button>
            <button class="tool on" aria-label="Toggle"><svg><use href="#sqtog"/></svg></button>
            <button class="tool on" aria-label="Red bounds"><svg><use href="#sqred"/></svg></button>
            <button class="tool on" aria-label="Double bounds"><svg><use href="#sqsplit"/></svg></button><button class="drop on" aria-label="Bounds options"></button>
            <button class="tool on" aria-label="Open book"><svg><use href="#book"/></svg></button>
          </div>
          <div class="group"><i class="grip"></i>
            <button class="tool on" aria-label="Face toggle"><svg><use href="#gtog"/></svg></button>
            <button class="tool" aria-label="Face shade"><svg><use href="#gbox"/></svg></button>
            <button class="tool" aria-label="Face cross"><svg><use href="#gplus"/></svg></button>
            <button class="tool" aria-label="Face dots"><svg><use href="#gdots"/></svg></button>
            <button class="tool on" aria-label="Face points"><svg><use href="#gpts"/></svg></button>
            <button class="tool" aria-label="Face marks"><svg><use href="#gmag"/></svg></button>
            <button class="tool" aria-label="Face sides"><svg><use href="#gside"/></svg></button>
          </div>
          <div class="group"><i class="grip"></i>
            <button class="tool on" aria-label="Curve toggle"><svg><use href="#ctog"/></svg></button>
            <button class="tool on" aria-label="Point"><svg><use href="#sqpt"/></svg></button><button class="drop on" aria-label="Point list"></button>
            <button class="tool on" aria-label="Arc"><svg><use href="#carc"/></svg></button><button class="drop on" aria-label="Arc list"></button>
            <button class="tool" aria-label="Plane"><svg><use href="#plane"/></svg></button>
            <button class="next" aria-label="More"><svg><use href="#chev-r"/></svg></button>
          </div>
        </div>
      </div>
    </main>

    <aside class="side">
      <div class="side-tools group"><i class="grip"></i>
        <button class="tool on" aria-label="Topo"><svg><use href="#yface"/></svg></button>
        <button class="tool" aria-label="Mesh"><svg><use href="#mesh"/></svg></button><button class="drop" aria-label="Mesh options"></button>
        <button class="tool" aria-label="Volume mesh"><svg><use href="#mesh3"/></svg></button>
        <button class="tool nas"><span>NAS</span></button><button class="drop" aria-label="Deck"></button>
        <button class="tool" aria-label="Morph"><svg><use href="#green"/></svg></button>
      </div>
      <h2 class="side-head">TOPO</h2>
      <div class="topo">
        <h3 class="play">Hot Points</h3>
        <div class="grid"><button>Insert</button><button>Project</button><button>Delete</button><button>Mult.Project</button><button>Release</button><button>Weld Spot</button></div>
        <h3>CONS</h3>
        <div class="grid"><button>Paste</button><button class="sub">Release</button><button>Open Hole</button><button>Project</button></div>
        <h3 class="play close">Faces</h3>
        <div class="grid tight"><button>Cut</button><button>Delete</button><button>New</button><button>Set PID</button><button>Proj.Cut</button><button class="sub">Mid.Surface</button><button class="sub">Fuse</button><button class="sub">Flange</button><button class="sub">Plane Cut</button><button class="sub">Offset</button><button>Zone Cut</button><button>Convert</button><button>Intersect</button><button class="sub">Extend</button><button>Modify</button></div>
        <h3 class="play">Surfaces</h3>
        <div class="grid"><button>Coons</button><button>Fit</button><button class="sub">Volume</button><button class="sub">Extrude</button><button>Contoured</button></div>
        <h3 class="play">Curves</h3>
        <div class="grid"><button>Create</button><button>Delete</button><button class="sub">Connect</button><button>Transform</button></div>
        <h3 class="play">Points</h3>
        <div class="grid"><button class="sub">New</button><button>Delete</button><button>Relative</button><button class="sub">On COG</button></div>
        <h3 class="close">Auxiliaries</h3>
        <div class="grid single"><button class="sub">Working Pl.</button><button class="sub">IGA</button></div>
      </div>
      <h2 class="side-head">Options List</h2>
      <div class="options"></div>
    </aside>
  </div>

  <footer class="taskbar">
    <i class="start"></i><i class="bars"></i>
    <button class="app-btn" aria-label="Browser"><svg viewBox="0 0 20 20"><circle cx="9" cy="9" r="7" stroke="#2f8ff0" stroke-width="3"/><path d="M9 18c-2-4 3-6 5-4 5-1 6 4 2 4z" fill="#fff" stroke="none"/></svg></button>
    <button class="app-btn" aria-label="Files"><svg viewBox="0 0 20 20"><path d="M2 3h6l2 2h8v13H2z" fill="#f7cf55" stroke="none"/><path d="M5 18v-6h10v6h-3v-3H8v3z" fill="#3f93cf" stroke="none"/></svg></button>
    <button class="app-btn" aria-label="Console"><svg viewBox="0 0 20 20"><path d="M2 4h17v13H2z" fill="#000" stroke="#aaa"/><path d="M2 5h17" stroke="#ccc" stroke-width="2"/><text x="3" y="14" fill="#fff">C:\</text></svg></button>
    <button class="app-btn live" aria-label="Model Browser"><svg viewBox="0 0 16 16"><use href="#ansa"/></svg></button>
    <div class="tray">
      <span class="temp">80℃<br>CPU温度</span>
      <svg viewBox="0 0 16 16"><path d="M2 11l6-6 6 6" stroke="#fff"/></svg>
      <svg viewBox="0 0 16 16"><circle cx="8" cy="8" r="7.500" fill="#b9d4f5" stroke="none"/><path d="M4 8h8M8 4v8" stroke="#1c62c4" stroke-width="3"/></svg>
      <svg viewBox="0 0 16 16"><path d="M4 6h11v7H4zM1 2v3h4V2M3 5v8" stroke="#fff"/><path d="M6 8h7v3H6z" fill="#fff" stroke="none"/></svg>
      <svg viewBox="0 0 16 16"><path d="M1 6h3l4-4v12l-4-4H1zM10 6c1 1 1 3 0 4M12 4c2 2 2 6 0 8M14 2c3 3 3 9 0 12" stroke="#fff"/></svg>
      <svg viewBox="0 0 16 16"><path d="M5 3h10v8H3V8M1 2h4v5H1zM9 11v3M6 14h7" stroke="#fff"/></svg>
      <span class="lang">英</span>
      <svg class="logo"><use href="#logo-s"/></svg>
      <span class="clock">8:5<br>202</span>
    </div>
  </footer>

  <div class="ime"><svg class="sogou"><use href="#logo-s"/></svg><b>英</b><b class="punct">•,</b>
    <svg viewBox="0 0 16 16"><circle cx="8" cy="8" r="7" stroke="#1c6fb8"/><path d="M4 9c1 4 7 4 8 0M6 5v2M10 5v2" stroke="#1c6fb8"/></svg>
    <svg viewBox="0 0 16 16"><rect x="5" y="1" width="6" height="9" rx="3" fill="#1c6fb8" stroke="none"/><path d="M2 7c0 7 12 7 12 0M8 12v3M4 15h8" stroke="#1c6fb8" stroke-width="2"/></svg>
  </div>

  <!-- floating Model Browser window -->
  <section class="window">
    <header class="win-title"><svg class="s16"><use href="#ansa"/></svg><h1>Model Browser</h1>
      <button aria-label="Minimize"><svg viewBox="0 0 12 12"><path d="M1 6h10" stroke="#111"/></svg></button>
      <button aria-label="Maximize"><svg viewBox="0 0 12 12"><path d="M1 1h10v10H1z" stroke="#111"/></svg></button>
      <button aria-label="Close"><svg viewBox="0 0 12 12"><path d="M1 1l10 10M11 1L1 11" stroke="#111"/></svg></button>
    </header>
    <div class="pane">
      <div class="tabline"><button class="tab-parts">Parts</button><button class="dots" aria-label="Menu"><svg viewBox="0 0 4 14"><path d="M1 1h2v2H1zM1 6h2v2H1zM1 11h2v2H1z" fill="#222" stroke="none"/></svg></button></div>
      <div class="actions">
        <button><svg class="s16"><use href="#new"/></svg>New</button>
        <button><svg class="s16"><use href="#wrench"/></svg>Utilities</button>
        <button><svg class="s14"><use href="#db"/></svg>DM</button>
        <i></i>
        <button><svg class="s16"><use href="#setpart"/></svg>Set Part</button>
        <button><svg class="s16"><use href="#replace"/></svg>Replace</button>
        <i></i>
      </div>
      <div class="search">
        <button class="btn off" aria-label="Back"><svg viewBox="0 0 16 16"><path d="M14 8H2l4-4M2 8l4 4"/></svg></button>
        <button class="btn off" aria-label="Forward"><svg viewBox="0 0 16 16"><path d="M2 8h12l-4-4M14 8l-4 4"/></svg></button>
        <button class="btn off" aria-label="Up"><svg viewBox="0 0 16 16"><path d="M8 14V2L4 6M8 2l4 4"/></svg></button>
        <button class="btn reload" aria-label="Reload"><svg viewBox="0 0 16 16"><path d="M13 5a6 6 0 1 0 1 4M14 1v5H9"/></svg></button>
        <button class="btn more" aria-label="Search mode"><svg viewBox="0 0 16 16"><circle cx="9" cy="6" r="5"/><path d="M5 10l-4 5"/></svg></button>
        <span class="combo"><input type="text" aria-label="Search parts"><svg><use href="#chev-thin"/></svg></span>
        <span class="pair"><button class="btn" aria-label="Hierarchy"><svg viewBox="0 0 16 16"><path d="M1 2h13M5 6h9M7 10h7M9 14h5"/></svg></button><button class="btn arr" aria-label="Hierarchy options"></button></span>
        <button class="btn" aria-label="Sort"><svg viewBox="0 0 16 16"><path d="M3 1h12M7 5h8M7 10h8M7 14h8"/><path d="M3 3v12M1 12l2 3 2-3" stroke="#3b6bd0"/></svg></button>
        <button class="btn" aria-label="Locate"><svg viewBox="0 0 16 16"><circle cx="9" cy="7" r="6"/><path d="M5 11l-4 4"/><circle cx="9" cy="7" r="2" fill="#2b5fd0" stroke="none"/></svg></button>
        <span class="pair"><button class="btn off" aria-label="Flash"><svg viewBox="0 0 16 16"><path d="M9 2l5 5-3 3H8l-5 5-2-2 5-5V5z"/></svg></button><button class="btn arr off" aria-label="Flash options"></button></span>
        <span class="pair"><button class="btn" aria-label="Pick"><svg><use href="#cursor"/></svg></button><button class="btn arr" aria-label="Pick options"></button></span>
      </div>

      <div class="tree">
        <table>
          <colgroup><col class="c1"><col class="c2"><col class="c3"><col class="c4"></colgroup>
          <thead><tr><th><svg class="s16"><use href="#bulb"/></svg></th><th>Module Id</th><th colspan="2" class="sorted">Name</th></tr></thead>
          <tbody>
            <tr class="sel alt"><td><svg class="s16"><use href="#bulb"/></svg></td><td></td><td></td><td><svg class="s16"><use href="#part-sel"/></svg>8402101-B20-20120315</td></tr>
            <tr><td><svg class="s16"><use href="#bulb"/></svg></td><td></td><td></td><td><svg class="s16"><use href="#part"/></svg>8402110-B20-WP-20120315</td></tr>
            <tr class="sel alt"><td><svg class="s16"><use href="#bulb"/></svg></td><td></td><td></td><td><svg class="s16"><use href="#part-sel"/></svg>8402111-B20-20120315</td></tr>
            <tr class="sel"><td><svg class="s16"><use href="#bulb"/></svg></td><td></td><td></td><td><svg class="s16"><use href="#part-sel"/></svg>8402112-B20-20120315</td></tr>
            <tr class="sel alt"><td><svg class="s16"><use href="#bulb"/></svg></td><td></td><td></td><td><svg class="s16"><use href="#part-sel"/></svg>8402113-B01-20120315</td></tr>
            <tr class="sel"><td><svg class="s16"><use href="#bulb"/></svg></td><td></td><td></td><td><svg class="s16"><use href="#part-sel"/></svg>8402113-B01-20120315</td></tr>
            <tr class="sel alt focus"><td><svg class="s16"><use href="#bulb"/></svg></td><td></td><td></td><td><svg class="s16"><use href="#part-sel"/></svg>8404100-B01-20120315</td></tr>
            <tr class="hover"><td><svg class="s16"><use href="#bulb"/></svg></td><td></td><td></td><td><svg class="s16"><use href="#part"/></svg>8404200-B01-20120315</td></tr>
            <tr class="alt"><td><svg class="s16"><use href="#bulb"/></svg></td><td></td><td></td><td><svg class="s16"><use href="#part"/></svg>Q37106-5</td></tr>
            <tr><td><svg class="s16"><use href="#bulb"/></svg></td><td></td><td></td><td><svg class="s16"><use href="#part"/></svg>Q37106-5</td></tr>
            <tr class="alt"><td><svg class="s16"><use href="#bulb"/></svg></td><td></td><td></td><td><svg class="s16"><use href="#part"/></svg></td></tr>
          </tbody>
        </table>
        <div class="tree-tools">
          <span class="pair"><button class="btn" aria-label="Filter"><svg class="s16"><use href="#funnel"/></svg></button><button class="btn arr" aria-label="Filter options"></button></span>
          <button class="btn more" aria-label="Columns"><svg class="s16"><use href="#cols"/></svg></button>
          <button class="btn thin" aria-label="More"><svg><use href="#chev-r"/></svg></button>
        </div>
        <div class="vbar"><svg><use href="#chev-u"/></svg><i></i><svg><use href="#chev-d"/></svg><svg><use href="#full"/></svg></div>
      </div>
      <div class="status"><span>total 45</span><span>selected 6</span></div>
    </div>

    <div class="tabs">
      <button class="current"><svg viewBox="0 0 14 14"><path d="M1 1h12v12H1zM3 4h2M6 4h5M3 7h2M6 7h5M3 10h2M6 10h5"/></svg>Details</button>
      <button><svg viewBox="0 0 14 14"><path d="M1 1h12"/><path d="M4 1v11h4M4 6h4M8 4h5v4H8zM8 10h5v3H8z" stroke="#3b6bd0"/></svg>Contents</button>
      <button><svg viewBox="0 0 14 14"><path d="M6 5l3-3c3-2 5 1 3 3L9 8H6M8 9l-3 3c-3 2-5-1-3-3l3-3h3"/></svg>Connectivity</button>
      <button><svg><use href="#db"/></svg>DM</button>
      <button><svg><use href="#curve"/></svg>Features</button>
      <button><svg viewBox="0 0 14 14"><path d="M5 1l6 1 2 4-2 2-3-3zM7 5l-6 7 2 1 6-7"/></svg>Build</button>
      <svg class="fold"><use href="#chev-thin"/></svg>
    </div>
    <div class="lower">
      <div class="props">
        <div class="props-body">
          <table>
            <thead><tr><th>Name</th><th>Value <span class="pair"><button class="btn" aria-label="Filter"><svg class="s16"><use href="#funnel"/></svg></button><button class="btn arr" aria-label="Filter options"></button></span></th></tr></thead>
            <tbody>
              <tr class="strong"><td>Name</td><td>8404100-B01-2⋯</td></tr>
              <tr class="strong"><td>Module Id</td><td></td></tr>
              <tr><td>Version</td><td></td></tr>
              <tr><td>Study Version</td><td>0</td></tr>
              <tr><td>Representation</td><td></td></tr>
              <tr><td>Created</td><td>15-2月-2023 08:5⋯</td></tr>
              <tr><td>Last Edit</td><td>15-2月-2023 08:5⋯</td></tr>
              <tr class="strong fold-row"><td><svg><use href="#chev-r"/></svg>Build</td><td></td></tr>
              <tr class="strong fold-row"><td><svg><use href="#chev-r"/></svg>General</td><td></td></tr>
              <tr class="strong fold-row"><td><svg><use href="#chev-r"/></svg>Characteristics</td><td></td></tr>
              <tr class="strong fold-row"><td><svg><use href="#chev-r"/></svg>Position</td><td></td></tr>
            </tbody>
          </table>
        </div>
        <div class="vbar"><svg><use href="#chev-u"/></svg><i></i><svg><use href="#chev-d"/></svg><svg><use href="#full"/></svg></div>
      </div>
      <div class="preview">
        <svg viewBox="757 136 789 621" preserveAspectRatio="none">
          <g stroke="none">
            <path d="M1075 376L1140 374 1200 395 1206 412 1245 380 1250 400 1222 460 1170 475 1000 578 985 576 975 556 935 530 931 512 1030 415z" fill="#5c1f8c"/>
            <path d="M1110 376L1140 374 1200 395 1206 408 1165 396 1120 388z" fill="#3f1169"/>
            <path d="M1150 405L1155 418 1000 545 975 548z" fill="#7434aa"/>
            <path d="M1150 438Q1200 440 1245 382L1225 415 1205 438 1160 446z" fill="#360f58"/>
            <path d="M1268 275L1290 240 1310 236 1316 255 1300 262z" fill="#58208a"/>
            <path d="M1270 270L1290 258 1302 300 1298 320 1314 430 1345 460 1230 570 1215 566 1192 545 1195 520 1250 400 1252 295z" fill="#a0a80e"/>
            <path d="M1285 340L1312 428 1270 450 1262 430z" fill="#c8cf12"/>
            <path d="M1256 310L1270 330 1275 370 1262 445 1256 440 1260 370z" fill="#59600a"/>
            <path d="M1310 425L1322 436 1205 548 1195 540z" fill="#c0c92e"/>
            <path d="M1280 270L1296 264 1298 290 1282 296z" fill="#5797ac"/><path d="M1276 306h18v10h-18z" fill="#bb7a22"/>
            <g fill="#fff"><ellipse cx="1038" cy="442" rx="12" ry="8"/><ellipse cx="962" cy="517" rx="12" ry="8"/><ellipse cx="1093" cy="492" rx="4" ry="6"/><ellipse cx="1312" cy="470" rx="8" ry="4"/><ellipse cx="1238" cy="543" rx="9" ry="6"/></g>
            <path d="M1265 514L1283 498" stroke="#fff" stroke-width="8" stroke-linecap="round"/>
          </g>
        </svg>
      </div>
    </div>
  </section>
  <svg class="pointer" viewBox="0 0 24 30"><circle cx="10" cy="9" r="8" fill="#e2e01c" fill-opacity=".8" stroke="none"/><path d="M10 8v17l4-4 3 6 2-1-3-6h5z" fill="#fff" stroke="#222"/></svg>
</div>
</body>
</html>
```
FILE: styles.css
```css
:root {
  --bg: #edefed;
  --paper: #fdfffd;
  --line: #a9aca9;
  --btn: #dfe1df;
  --blue: #0078d7;
  --on: #b9d8f1;
  --on-line: #8fc2ea;
}

* {
  box-sizing: border-box;
}

body {
  margin: 0;
  overflow: hidden;
  font-family: "Liberation Mono", "Noto Sans CJK SC", monospace;
  font-size: 12px;
  line-height: 16px;
  color: #111;
}

button {
  font: inherit;
  color: inherit;
  padding: 0;
  border: none;
  background: none;
}

input {
  font: inherit;
  border: none;
  background: none;
  outline: none;
  min-width: 0;
  padding: 0;
}

h1, h2, h3, p, pre {
  margin: 0;
  font: inherit;
}

svg {
  display: block;
  flex: none;
  fill: none;
  stroke: #333b40;
  stroke-width: 1;
  overflow: hidden;
}

.sprite {
  position: absolute;
  width: 0;
  height: 0;
}

.s16 {
  width: 16px;
  height: 16px;
}

.s14 {
  width: 14px;
  height: 14px;
  stroke-width: 2;
}

.app {
  position: relative;
  height: 100vh;
  display: flex;
  flex-direction: column;
  overflow: hidden;
  background: var(--bg);
}

/* title and menu */
.titlebar {
  height: 22px;
  display: flex;
  justify-content: space-between;
  align-items: center;
  background: var(--paper);
  font: 13px/22px "Open Sans", sans-serif;
  color: #999;
}

.min {
  width: 10px;
  height: 1px;
  margin-right: 15px;
  background: #888;
}

.menubar {
  height: 20px;
  display: flex;
  align-items: flex-end;
  gap: 14px;
  padding-left: 7px;
  line-height: 18px;
  background: var(--paper);
}

.find {
  width: 536px;
  height: 19px;
  margin-left: auto;
  display: flex;
  align-items: center;
  gap: 2px;
  padding-left: 4px;
  border: 1px solid #777;
  border-right: none;
}

.find svg {
  width: 11px;
  height: 12px;
}

.find input {
  flex: 1;
}

.find input::placeholder {
  color: #777;
  opacity: 1;
}

.body {
  flex: 1;
  min-height: 0;
  display: flex;
}

.work {
  flex: 1;
  min-width: 0;
  display: grid;
  grid-template-columns: 204px 220px 1fr;
  grid-template-rows: 36px 1fr 20px 82px;
}

/* left dock */
.dock {
  grid-row: 1 / 4;
  display: flex;
  flex-direction: column;
  gap: 3px;
  padding: 0 6px 2px 0;
}

.dock-head {
  height: 20px;
  display: flex;
  justify-content: flex-end;
  align-items: center;
  padding-right: 2px;
  background: #d9dbd9;
  border: 1px solid #bfc1bf;
}

.dock-head svg {
  width: 10px;
  height: 10px;
}

.dock-list {
  flex: 1;
  background: var(--paper);
  border: 1px solid #888;
  border-left: none;
}

.dock-cols {
  display: grid;
  grid-template-columns: 40px 56px 64px 15px 21px;
  align-items: center;
  height: 25px;
}

.dock-cols span {
  height: 25px;
  line-height: 25px;
  padding-left: 4px;
  border-right: 1px solid #ddd;
}

/* toolbars */
.toolbar {
  display: grid;
}

.top {
  grid-column: 2 / 4;
  padding-top: 1px;
  grid-template-columns: 265fr 204fr 146fr 352fr 180fr 213fr;
}

.bottom {
  grid-column: 3;
  grid-row: 3 / 5;
  padding: 26px 0 0 4px;
  display: flex;
  flex-direction: column;
  gap: 13px;
}

.row1 {
  grid-template-columns: 386fr 314fr 436fr;
}

.row2 {
  grid-template-columns: 136fr 250fr 314fr 249fr 187fr;
}

.group {
  display: flex;
  align-items: flex-start;
  min-width: 0;
}

.grip {
  width: 4px;
  height: 29px;
  margin: 0 2px 0 1px;
  flex: none;
  background: radial-gradient(#999 35%, transparent 40%) 0 0 / 2px 3px;
}

.tool {
  position: relative;
  flex: none;
  width: 31px;
  height: 29px;
  display: grid;
  place-items: center;
  border: 1px solid transparent;
}

.tool svg {
  width: 24px;
  height: 24px;
}

.drop {
  flex: none;
  width: 12px;
  height: 29px;
  display: grid;
  place-items: center;
  border: 1px solid transparent;
}

.drop::before {
  content: "";
  border: 4px solid transparent;
  border-top: 5px solid #222;
  border-bottom: none;
}

.drop.dim::before {
  border-top-color: #777;
}

.on {
  background: var(--on);
  border-color: var(--on-line);
}

.next {
  width: 14px;
  height: 29px;
  display: grid;
  place-items: center;
}

.next svg {
  width: 13px;
  height: 13px;
}

.more {
  position: relative;
}

.more::after {
  content: "";
  position: absolute;
  right: 1px;
  bottom: 1px;
  border-left: 5px solid transparent;
  border-bottom: 5px solid #111;
}

.letter b {
  grid-area: 1 / 1;
  justify-self: start;
  z-index: 1;
  padding-left: 3px;
  font: bold 19px "DejaVu Sans Mono", monospace;
  color: #4467c0;
}

.letter svg {
  grid-area: 1 / 1;
}

.word {
  font: bold 12px/12px "DejaVu Sans Mono", monospace;
  color: #777;
  align-content: start;
}

.word svg {
  position: absolute;
  left: 1px;
  top: 3px;
}

.ent {
  font: 12px/12px "DejaVu Sans Mono", monospace;
}

.ent svg {
  width: 24px;
  height: 14px;
}

.spin {
  flex: none;
  width: 49px;
  height: 20px;
  margin-top: 5px;
  display: flex;
  align-items: center;
  padding: 0 4px;
  border: 1px solid #c4c6c4;
  color: #777;
}

.spin input {
  flex: 1;
  color: #777;
}

.spin svg {
  width: 8px;
  height: 14px;
}

/* 3D view */
.viewport {
  grid-column: 2 / 4;
  grid-row: 2;
  margin-right: 5px;
  position: relative;
  overflow: hidden;
  background: linear-gradient(#00111d, #061b29 25%, #1c3240 70%, #2d4655);
}

.part-line {
  padding: 2px 3px;
  color: #e4ecef;
}

.axes {
  position: absolute;
  right: 73px;
  top: 12px;
  width: 90px;
  height: 90px;
}

.axes text {
  stroke: none;
  font-size: 12px;
}

.hood {
  position: absolute;
  left: 426px;
  top: 232px;
  width: 600px;
  height: 420px;
}

.hood path {
  vector-effect: non-scaling-stroke;
}

/* message log */
.log {
  grid-column: 1 / 3;
  grid-row: 4;
  margin: 5px 5px 6px 0;
  display: grid;
  grid-template-columns: 1fr 16px;
  grid-template-rows: 1fr 16px;
  background: var(--paper);
  border: 1px solid #777;
  border-left: none;
  overflow: hidden;
}

.log pre {
  height: 45px;
  margin-top: -5px;
  line-height: 15px;
}

.log .vbar i {
  height: 9px;
  margin-top: 8px;
}

.hbar {
  grid-column: 1 / 3;
  display: flex;
  align-items: center;
  gap: 4px;
  background: #f0f2f0;
}

.hbar i {
  width: 280px;
  height: 16px;
  margin-right: auto;
  background: #cacccb;
}

.hbar svg {
  width: 14px;
  height: 12px;
}

.vbar {
  width: 16px;
  display: flex;
  flex-direction: column;
  align-items: center;
  background: #f0f2f0;
}

.vbar svg {
  width: 10px;
  height: 16px;
}

.vbar i {
  width: 100%;
  background: #cacccb;
}

.vbar i + svg {
  margin-top: auto;
}

/* right panel */
.side {
  flex: none;
  width: 164px;
  display: flex;
  flex-direction: column;
  overflow: hidden;
}

.side-tools {
  height: 43px;
  padding: 5px 0 0 1px;
}

.nas span {
  padding: 3px 1px;
  font: bold 10px/12px "DejaVu Sans", sans-serif;
  color: #c8372f;
  background: #f9e1dd;
  border: 1px solid #e5aaa3;
}

.side-head {
  height: 20px;
  padding-left: 1px;
  line-height: 18px;
  background: #d9dbd9;
  border: 1px solid #bfc1bf;
  border-right: none;
}

.topo {
  margin: 1px 0 4px;
  padding: 0 0 8px 8px;
  border: 1px solid #d4dcd4;
  border-right: none;
  font-family: "Liberation Sans", sans-serif;
}

.topo h3 {
  height: 32px;
  padding: 5px 0 0 7px;
  display: flex;
  align-items: center;
  font-weight: bold;
}

.topo .close {
  height: 30px;
}

.play::after {
  content: "";
  margin-left: 6px;
  border: 4px solid transparent;
  border-left: 7px solid #111;
  border-right: none;
}

.grid {
  display: grid;
  grid-template-columns: 79px 79px;
  grid-auto-rows: 22px;
  gap: 2px;
}

.tight {
  grid-auto-rows: 20px;
}

.single {
  grid-template-columns: 79px;
  grid-auto-rows: 21px;
}

.grid button {
  position: relative;
  white-space: nowrap;
  background: var(--btn);
  border: 1px solid var(--line);
}

.grid .sub {
  padding-right: 11px;
}

.sub::after {
  content: "";
  position: absolute;
  right: 4px;
  top: 6px;
  border: 3px solid transparent;
  border-left: 6px solid #111;
  border-right: none;
}

.options {
  flex: 1;
  margin: 5px 0 5px 3px;
  background: var(--paper);
  border: 1px solid #888;
  border-right: none;
}

/* taskbar */
.taskbar {
  height: 34px;
  display: flex;
  background: linear-gradient(90deg, #2a3847, #22303f 30%, #2b3844 70%, #333b44);
  color: #fff;
  font-family: "Open Sans", "Noto Sans CJK SC", sans-serif;
}

.start {
  width: 2px;
  height: 16px;
  margin: 8px 16px 0 0;
  background: #eee;
}

.bars {
  width: 4px;
  height: 18px;
  margin: 8px 13px 0 0;
  border: 1px solid #596674;
  border-width: 0 1px;
}

.app-btn {
  width: 29px;
  height: 31px;
  margin: 0 4px;
  display: grid;
  place-items: center;
  border-bottom: 2px solid #76b0dc;
}

.app-btn.live {
  width: 36px;
  margin: 0;
  background: #4b5966;
}

.app-btn svg {
  width: 20px;
  height: 20px;
}

.app-btn.live svg {
  width: 16px;
  height: 16px;
}

.app-btn text {
  font: 8px "Liberation Sans", sans-serif;
  stroke: none;
}

.tray {
  margin-left: auto;
  display: flex;
  align-items: center;
  gap: 8px;
}

.tray svg {
  width: 16px;
  height: 16px;
}

.temp {
  text-align: center;
  line-height: 17px;
  margin-right: 10px;
}

.lang {
  font-size: 14px;
}

.tray .logo {
  margin-left: 6px;
}

.clock {
  margin-left: 2px;
  line-height: 17px;
  text-align: right;
}

/* input-method bar over the panel corner */
.ime {
  position: absolute;
  right: 0;
  bottom: 35px;
  width: 100px;
  height: 22px;
  display: flex;
  align-items: center;
  gap: 6px;
  padding-left: 22px;
  background: var(--paper);
  border: 1px solid #d5d8dc;
  border-right: none;
  overflow: visible;
  color: #1c6fb8;
  font: 15px "Noto Sans CJK SC", sans-serif;
}

.ime svg {
  width: 16px;
  height: 16px;
}

.ime .punct {
  font-size: 12px;
  margin-left: 2px;
}

.ime .sogou {
  position: absolute;
  left: -12px;
  top: -4px;
  width: 28px;
  height: 28px;
}

/* floating window */
.window {
  position: absolute;
  left: 3px;
  top: 96px;
  width: 636px;
  height: 628px;
  display: flex;
  flex-direction: column;
  padding: 0 6px 0 3px;
  background: var(--paper);
  border: 1px solid #8b8f90;
  border-top-color: #eee;
  box-shadow: 0 3px 12px rgba(0, 0, 0, .45);
}

.win-title {
  height: 29px;
  flex: none;
  display: flex;
  align-items: center;
  margin-right: -6px;
  padding: 0 0 3px 4px;
}

.win-title h1 {
  flex: 1;
  padding-left: 5px;
  font: 13px "Open Sans", sans-serif;
}

.win-title button {
  width: 45px;
  display: grid;
  place-items: center;
}

.win-title svg:not(.s16) {
  width: 12px;
  height: 12px;
}

.pane {
  height: 350px;
  flex: none;
  display: flex;
  flex-direction: column;
  padding: 0 2px 4px;
  border: 1px solid #dcdedc;
  border-left: none;
}

.tabline {
  height: 23px;
  flex: none;
  display: flex;
  justify-content: space-between;
  border-bottom: 1px solid #d5d7d5;
  margin-left: -2px;
}

.tab-parts {
  width: 57px;
  height: 22px;
  margin-top: 1px;
  background: var(--paper);
  border: 1px solid #d5d7d5;
  border-bottom: none;
}

.dots {
  padding-right: 6px;
}

.dots svg {
  width: 4px;
  height: 14px;
}

.actions {
  height: 42px;
  flex: none;
  display: flex;
  margin-left: -4px;
}

.actions button {
  display: flex;
  flex-direction: column;
  align-items: center;
  justify-content: flex-end;
  padding: 0 12px 2px;
}

.actions i {
  width: 1px;
  margin: 1px 3px;
  background: #999;
}

.search {
  height: 20px;
  flex: none;
  margin: 4px 4px 6px;
  display: flex;
  gap: 3px;
}

.btn {
  flex: none;
  width: 20px;
  height: 20px;
  display: grid;
  place-items: center;
  background: #e3e5e3;
  border: 1px solid #b3b5b3;
}

.btn svg {
  width: 16px;
  height: 16px;
}

.btn.off {
  background: #cdcfcd;
}

.btn.off svg {
  stroke: #888;
}

.reload {
  margin: 0 3px;
}

.combo {
  flex: 1;
  display: flex;
  align-items: center;
  border: 2px solid #8d8f8d;
}

.combo input {
  flex: 1;
}

.combo svg {
  width: 10px;
  height: 10px;
  margin-right: 3px;
}

.combo ~ * {
  margin-left: 3px;
}

.pair {
  display: flex;
}

.arr {
  width: 13px;
  border-left: none;
}

.arr::before {
  content: "";
  border: 4px solid transparent;
  border-top: 5px solid #111;
  border-bottom: none;
}

.arr.off::before {
  border-top-color: #eee;
}

.btn.thin {
  width: 10px;
}

.btn.thin svg {
  width: 12px;
  height: 12px;
}

/* part tree */
.tree {
  flex: 1;
  min-height: 0;
  display: flex;
  overflow: hidden;
  border: 1px solid #888;
  border-bottom-width: 2px;
}

table {
  border-collapse: collapse;
  table-layout: fixed;
}

th, td {
  padding: 0;
  font-weight: normal;
  text-align: left;
  white-space: nowrap;
}

.tree table {
  width: 405px;
  height: 246px;
}

.tree .c1 { width: 25px; }
.tree .c2 { width: 80px; }
.tree .c3 { width: 40px; }
.tree .c4 { width: 260px; }

.tree th {
  height: 24px;
  padding-left: 4px;
  border-right: 1px solid #ddd;
}

.tree th.sorted {
  position: relative;
  padding-left: 3px;
  border: 1px dotted #888;
}

.sorted::after {
  content: "";
  position: absolute;
  left: 50%;
  top: 0;
  margin-left: -4px;
  border: 4px solid transparent;
  border-bottom: 5px solid #111;
  border-top: none;
}

.tree td {
  height: 20px;
}

.tree td:first-child {
  padding-left: 4px;
}

.tree td:last-child svg {
  display: inline-block;
  vertical-align: middle;
  margin: 0 7px 0 2px;
}

.alt td {
  background: #e6e8e6;
}

.sel td:not(:nth-child(3)) {
  background: var(--blue);
  color: #d8f6ff;
}

.focus {
  outline: 1px dotted #999;
  outline-offset: -1px;
}

.hover {
  outline: 1px solid #2b6f9f;
  outline-offset: -1px;
}

.tree-tools {
  flex: 1;
  display: flex;
  justify-content: flex-end;
  gap: 2px;
  padding: 2px 3px 0 0;
}

.tree .vbar svg {
  height: 18px;
}

.tree .vbar i {
  height: 85px;
  margin-top: 24px;
}

.status {
  height: 17px;
  flex: none;
  display: flex;
  justify-content: flex-end;
  border: 1px solid #888;
  border-top: none;
}

.status span {
  height: 16px;
  padding: 0 4px;
  line-height: 18px;
  border-left: 1px solid #888;
}

/* details part */
.tabs {
  height: 23px;
  flex: none;
  margin-top: 5px;
  display: flex;
  align-items: flex-end;
}

.tabs button {
  height: 22px;
  display: flex;
  align-items: center;
  gap: 4px;
  padding: 0 12px 0 11px;
  background: #eceeec;
  border: 1px solid #dadcda;
  border-left: none;
}

.tabs button.current {
  height: 23px;
  background: var(--paper);
}

.tabs svg {
  width: 14px;
  height: 14px;
}

.tabs svg.fold {
  width: 12px;
  height: 12px;
  margin: 0 4px 6px auto;
}

.lower {
  height: 210px;
  flex: none;
  margin-top: 1px;
  padding-left: 1px;
  display: flex;
  gap: 4px;
}

.props {
  width: 297px;
  display: flex;
  overflow: hidden;
  border: 1px solid #888;
}

.props-body {
  flex: 1;
}

.props table {
  width: 278px;
}

.props th {
  height: 23px;
  padding-left: 4px;
}

.props th:first-child {
  width: 145px;
  border-right: 1px solid #ddd;
}

.props th .pair {
  float: right;
  line-height: 16px;
}

.props td {
  height: 18px;
  line-height: 17px;
  padding-left: 4px;
  border: 1px solid #999;
  border-top: none;
  overflow: hidden;
}

.props td:first-child {
  padding-left: 22px;
  border-left: none;
}

.props tr:nth-child(even) td {
  background: #e6e8e6;
}

.strong td {
  font-weight: bold;
}

.fold-row td:first-child {
  padding-left: 3px;
}

.fold-row svg {
  display: inline-block;
  vertical-align: middle;
  width: 12px;
  height: 12px;
  margin-right: 7px;
  opacity: .6;
}

.props .vbar i {
  height: 104px;
}

.preview {
  flex: 1;
  height: 207px;
  border: 1px solid #999;
  border-right-color: #ddd;
  border-bottom-color: #ddd;
}

.preview svg {
  width: 100%;
  height: 100%;
}

.pointer {
  position: absolute;
  left: 284px;
  top: 382px;
  width: 24px;
  height: 30px;
}
```
